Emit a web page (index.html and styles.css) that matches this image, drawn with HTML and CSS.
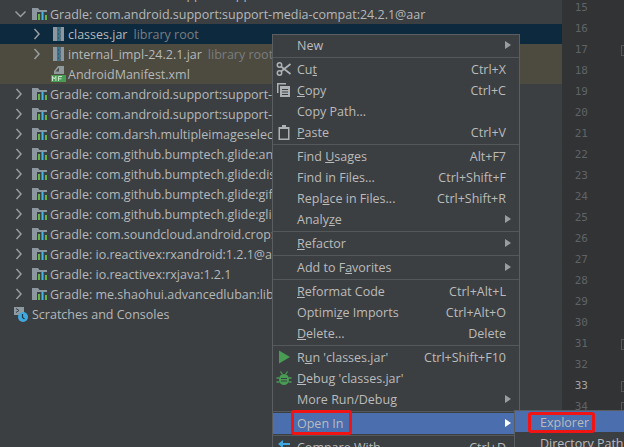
FILE: index.html
```html
<!DOCTYPE html>
<html lang="en">
<head>
<meta charset="utf-8">
<title>Open In</title>
<link rel="stylesheet" href="styles.css">
</head>
<body>
<svg class="defs" width="0" height="0" aria-hidden="true">
  <symbol id="i-arrow" viewBox="0 0 20 20"><path d="M3.500 5 8 10l-4.500 5" fill="none" stroke="#9a9da0" stroke-width="1.500"/></symbol>
  <symbol id="i-down" viewBox="0 0 20 20"><path d="M2.500 7.500 7.500 12.500l5-5" fill="none" stroke="#9a9da0" stroke-width="1.500"/></symbol>
  <symbol id="i-lib" viewBox="0 0 16 16">
    <path d="M0 2h6l1.500 2H15v2H5v8H0z" fill="#8c979f"/>
    <rect x="6" y="8" width="2" height="6" fill="#62b543"/>
    <rect x="9.500" y="6" width="2" height="8" fill="#40b6e0"/>
    <rect x="13" y="9" width="2" height="5" fill="#62b543"/>
  </symbol>
  <symbol id="i-jar" viewBox="0 0 16 16">
    <rect x="2" y="1" width="11" height="14" fill="#8c979f"/>
    <rect x="6.500" y="1" width="3" height="14" fill="#2a3b47"/>
    <path d="M7 1.500h2v1H7zM7.500 3.500h2v1h-2zM7 5.500h2v1H7zM7.500 7.500h2v1h-2zM7 9.500h2v1H7zM7.500 11.500h2v1h-2zM7 13.500h2v1H7z" fill="#40b6e0"/>
  </symbol>
  <symbol id="i-manifest" viewBox="1 0 16 16">
    <path d="M8 0h6v8H4V5z" fill="#8f9a9f"/>
    <path d="M9 1.500V5.500H5.500z" fill="#4d4a3f"/>
    <rect x="0" y="9" width="16" height="7" fill="#499c54"/>
    <path d="M2.500 15v-4.600l1.700 2.500 1.700-2.500V15M8.500 15v-4.500h3.500M8.500 12.800h3" fill="none" stroke="#d8ecd9" stroke-width=".9"/>
  </symbol>
  <symbol id="i-scratch" viewBox="0 0 18 18">
    <rect x="1" y="2" width="10" height="8" fill="#8e9aa1"/>
    <path d="M3 3.500l3 2-3 2" fill="none" stroke="#3c3f41" stroke-width="1"/>
    <circle cx="10" cy="12" r="5" fill="#40a8e0"/>
    <path d="M9.500 9v3.500l2 1.500" fill="none" stroke="#20394a" stroke-width="1.200"/>
  </symbol>
  <symbol id="i-cut" viewBox="0 0 16 16">
    <circle cx="3.500" cy="12" r="2.200" fill="none" stroke="#aeb2b4" stroke-width="1.500"/>
    <circle cx="3.500" cy="4" r="2.200" fill="none" stroke="#aeb2b4" stroke-width="1.500"/>
    <path d="M5 5.500 14.500 13M5 10.500 14.500 3" fill="none" stroke="#aeb2b4" stroke-width="1.700"/>
  </symbol>
  <symbol id="i-copy" viewBox="0 0 16 16">
    <path d="M1 1h9v1.500H2.500V11H1z" fill="#aeb2b4"/>
    <path d="M4 4h10v11H4z" fill="#aeb2b4"/>
    <path d="M6 7h6v1H6zM6 9.500h6v1H6zM6 12h6v1H6z" fill="#3c3f41"/>
  </symbol>
  <symbol id="i-paste" viewBox="0 0 16 16">
    <path d="M2.500 3H6V1h4v2h3.500v13h-11zM4 5v9.500h8V5z" fill="#aeb2b4" fill-rule="evenodd"/>
  </symbol>
  <symbol id="i-run" viewBox="0 0 16 16"><path d="M3 1.500 14 8 3 14.500z" fill="#499c54"/></symbol>
  <symbol id="i-debug" viewBox="0 0 16 16">
    <ellipse cx="8" cy="9.500" rx="5" ry="5.500" fill="#499c54"/>
    <path d="M5 8h6v1H5zM5 10.500h6v1H5z" fill="#3c3f41"/>
    <path d="M4.500 1.500 6.500 4.500M11.500 1.500 9.500 4.500M.5 8h3M12.500 8h3M.5 12h3M12.500 12h3" stroke="#499c54" stroke-width="1.300" fill="none"/>
  </symbol>
  <symbol id="i-compare" viewBox="0 0 16 16"><path d="M2 5 7 1v3h7v2H7v3z" fill="#40a8e0"/></symbol>
</svg>

<div class="window">
  <main class="tree">
    <div class="row"><svg class="arrow"><use href="#i-arrow"/></svg><svg class="ico lib"><use href="#i-lib"/></svg><span class="name">Gradle: com.android.support:support-annotations:24.2.1</span></div>
    <div class="row"><svg class="arrow"><use href="#i-down"/></svg><svg class="ico lib"><use href="#i-lib"/></svg><span class="name">Gradle: com.android.support:support-media-compat:24.2.1@aar</span></div>
    <div class="row child selected"><svg class="arrow"><use href="#i-arrow"/></svg><svg class="ico"><use href="#i-jar"/></svg><span class="name">classes.jar</span><span class="hint">library root</span></div>
    <div class="row child tinted"><svg class="arrow"><use href="#i-arrow"/></svg><svg class="ico"><use href="#i-jar"/></svg><span class="name">internal_impl-24.2.1.jar</span><span class="hint">library root</span></div>
    <div class="row child tinted"><span class="arrow"></span><svg class="ico"><use href="#i-manifest"/></svg><span class="name">AndroidManifest.xml</span></div>
    <div class="row"><svg class="arrow"><use href="#i-arrow"/></svg><svg class="ico lib"><use href="#i-lib"/></svg><span class="name">Gradle: com.android.support:support-v4:24.2.1@aar</span></div>
    <div class="row"><svg class="arrow"><use href="#i-arrow"/></svg><svg class="ico lib"><use href="#i-lib"/></svg><span class="name">Gradle: com.android.support:support-vector-drawable:24.2.1@aar</span></div>
    <div class="row"><svg class="arrow"><use href="#i-arrow"/></svg><svg class="ico lib"><use href="#i-lib"/></svg><span class="name">Gradle: com.darsh.multipleimageselect:library:1.0@aar</span></div>
    <div class="row"><svg class="arrow"><use href="#i-arrow"/></svg><svg class="ico lib"><use href="#i-lib"/></svg><span class="name">Gradle: com.github.bumptech.glide:annotations:4.9.0</span></div>
    <div class="row"><svg class="arrow"><use href="#i-arrow"/></svg><svg class="ico lib"><use href="#i-lib"/></svg><span class="name">Gradle: com.github.bumptech.glide:disklrucache:4.9.0</span></div>
    <div class="row"><svg class="arrow"><use href="#i-arrow"/></svg><svg class="ico lib"><use href="#i-lib"/></svg><span class="name">Gradle: com.github.bumptech.glide:gifdecoder:4.9.0@aar</span></div>
    <div class="row"><svg class="arrow"><use href="#i-arrow"/></svg><svg class="ico lib"><use href="#i-lib"/></svg><span class="name">Gradle: com.github.bumptech.glide:glide:4.9.0@aar</span></div>
    <div class="row"><svg class="arrow"><use href="#i-arrow"/></svg><svg class="ico lib"><use href="#i-lib"/></svg><span class="name">Gradle: com.soundcloud.android.crop:lib_crop:1.0.0@aar</span></div>
    <div class="row"><svg class="arrow"><use href="#i-arrow"/></svg><svg class="ico lib"><use href="#i-lib"/></svg><span class="name">Gradle: io.reactivex:rxandroid:1.2.1@aar</span></div>
    <div class="row"><svg class="arrow"><use href="#i-arrow"/></svg><svg class="ico lib"><use href="#i-lib"/></svg><span class="name">Gradle: io.reactivex:rxjava:1.2.1</span></div>
    <div class="row"><svg class="arrow"><use href="#i-arrow"/></svg><svg class="ico lib"><use href="#i-lib"/></svg><span class="name">Gradle: me.shaohui.advancedluban:library:1.3.2@aar</span></div>
    <div class="row"><svg class="ico wide"><use href="#i-scratch"/></svg><span class="name">Scratches and Consoles</span></div>
  </main>
  <aside class="gutter">
    <div class="ln">15</div><div class="ln">16</div><div class="ln fold">17</div><div class="ln">18</div><div class="ln">19</div><div class="ln">20</div><div class="ln">21</div><div class="ln">22</div><div class="ln">23</div><div class="ln">24</div><div class="ln">25</div><div class="ln">26</div><div class="ln">27</div><div class="ln">28</div><div class="ln">29</div><div class="ln">30</div><div class="ln fold">31</div><div class="ln">32</div><div class="ln fold cur">33</div><div class="ln fold">34</div>
  </aside>
</div>

<nav class="menu">
  <div class="item"><span class="label">New</span><span class="sub"></span></div>
  <div class="sep"></div>
  <div class="item"><svg class="mi"><use href="#i-cut"/></svg><span class="label">Cu<u>t</u></span><span class="key">Ctrl+X</span></div>
  <div class="item"><svg class="mi"><use href="#i-copy"/></svg><span class="label"><u>C</u>opy</span><span class="key">Ctrl+C</span></div>
  <div class="item"><span class="label">Copy Path...</span></div>
  <div class="item"><svg class="mi"><use href="#i-paste"/></svg><span class="label"><u>P</u>aste</span><span class="key">Ctrl+V</span></div>
  <div class="sep"></div>
  <div class="item"><span class="label">Find <u>U</u>sages</span><span class="key">Alt+F7</span></div>
  <div class="item"><span class="label">Find in Files...</span><span class="key">Ctrl+Shift+F</span></div>
  <div class="item"><span class="label">Repl<u>a</u>ce in Files...</span><span class="key">Ctrl+Shift+R</span></div>
  <div class="item"><span class="label">Analy<u>z</u>e</span><span class="sub"></span></div>
  <div class="sep"></div>
  <div class="item"><span class="label"><u>R</u>efactor</span><span class="sub"></span></div>
  <div class="sep"></div>
  <div class="item"><span class="label">Add to F<u>a</u>vorites</span><span class="sub"></span></div>
  <div class="sep"></div>
  <div class="item"><span class="label"><u>R</u>eformat Code</span><span class="key">Ctrl+Alt+L</span></div>
  <div class="item"><span class="label">Optimi<u>z</u>e Imports</span><span class="key">Ctrl+Alt+O</span></div>
  <div class="item"><span class="label"><u>D</u>elete...</span><span class="key">Delete</span></div>
  <div class="sep"></div>
  <div class="item"><svg class="mi"><use href="#i-run"/></svg><span class="label">R<u>u</u>n 'classes.jar'</span><span class="key">Ctrl+Shift+F10</span></div>
  <div class="item"><svg class="mi"><use href="#i-debug"/></svg><span class="label"><u>D</u>ebug 'classes.jar'</span></div>
  <div class="item"><span class="label">More Run/Debug</span><span class="sub"></span></div>
  <div class="sep"></div>
  <div class="item active"><span class="label">Open In</span><span class="sub"></span></div>
  <div class="sep"></div>
  <div class="item"><svg class="mi"><use href="#i-compare"/></svg><span class="label">Compare With...</span><span class="key">Ctrl+D</span></div>
</nav>

<nav class="submenu">
  <div class="item active"><span class="label">Explorer</span></div>
  <div class="item"><span class="label">Directory Path</span></div>
</nav>

<div class="mark mark-open"></div>
<div class="mark mark-explorer"></div>
</body>
</html>
```
FILE: styles.css
```css
* { box-sizing: border-box; }
html, body { margin: 0; height: 100%; }
body {
  width: 624px;
  height: 447px;
  overflow: hidden;
  position: relative;
  background: #3c3f41;
  font-family: "Open Sans", "Noto Sans", sans-serif;
  font-size: 12.5px;
  color: #b4b8ba;
}
.defs { position: absolute; }
.window { display: flex; height: 447px; overflow: hidden; }

.tree { width: 562px; flex: none; background: #3c3f41; margin-top: -16px; }
.row {
  display: flex;
  align-items: center;
  height: 20px;
  padding-left: 13px;
  white-space: nowrap;
  overflow: hidden;
}
.row.child { padding-left: 31px; }
.row.selected { background: #0d293e; }
.row.tinted { background: #4d4a3f; }
.arrow { width: 20px; height: 20px; flex: none; }
.ico { width: 16px; height: 16px; flex: none; margin-right: 1px; }
.ico.lib { margin-left: -1px; margin-right: 2px; }
.ico.wide { width: 18px; height: 18px; margin-right: 1px; }
.hint { color: #7a7d7f; margin-left: 6px; }

.gutter {
  flex: 1;
  background: #313335;
  font-family: "DejaVu Sans Mono", monospace;
  font-size: 11px;
  color: #606366;
  margin-top: -3px;
}
.ln {
  height: 21px;
  line-height: 21px;
  width: 26px;
  text-align: right;
  position: relative;
}
.ln.cur { color: #a4a3a3; }
.ln.fold::after {
  content: "";
  position: absolute;
  left: 59px;
  top: 6px;
  width: 9px;
  height: 9px;
  border: 1px solid #55585a;
}

.menu, .submenu {
  position: absolute;
  background: #3c3f41;
  border: 1px solid #5b5e60;
  white-space: nowrap;
}
.menu { left: 272px; top: 34px; width: 248px; }
.submenu { left: 514px; top: 410px; width: 130px; }
.item {
  display: flex;
  align-items: center;
  height: 21px;
  padding-left: 24px;
  padding-right: 13px;
  position: relative;
  color: #bbbbbb;
}
.item.active { background: #4b6eaf; }
.label { flex: 1; }
.key { flex: none; }
.mi {
  position: absolute;
  left: 3px;
  top: 2px;
  width: 16px;
  height: 16px;
}
.sep { height: 3px; padding-top: 1px; }
.sep::before { content: ""; display: block; height: 1px; background: #55585a; }
.sub {
  position: absolute;
  right: 8px;
  top: 6px;
  border-left: 6px solid #9a9da0;
  border-top: 4px solid transparent;
  border-bottom: 4px solid transparent;
}
.active .sub { border-left-color: #ffffff; }
.submenu .item { padding-left: 25px; padding-top: 1px; }

.mark { position: absolute; border: 3px solid #f01414; border-radius: 3px; }
.mark-open { left: 291px; top: 410px; width: 61px; height: 25px; }
.mark-explorer { left: 528px; top: 412px; width: 67px; height: 21px; }
```
